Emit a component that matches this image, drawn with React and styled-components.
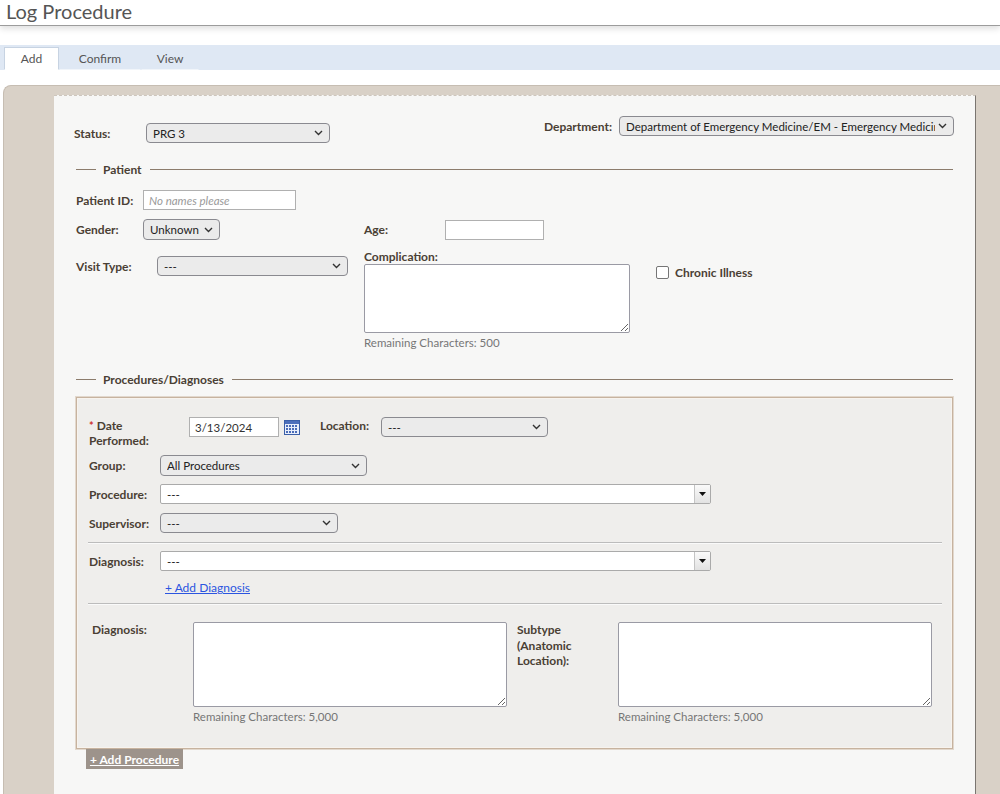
import React from "react";
import styled, { createGlobalStyle } from "styled-components";

const GlobalStyle = createGlobalStyle`
    body {
        margin: 0;
        background: #fff;
        font-family: "Lato", "Liberation Sans", sans-serif;
        font-size: 12px;
        color: #222;
    }
`;

const Header = styled.div`
    height: 25px;
    border-bottom: 1px solid #9c9c9c;
    box-shadow: 0 3px 6px rgba(0, 0, 0, 0.12);
    padding-left: 6px;
`;

const Title = styled.h1`
    margin: 0;
    font-size: 20px;
    font-weight: 400;
    line-height: 22px;
    color: #555;
`;

const TabBar = styled.div`
    display: flex;
    margin-top: 19px;
    height: 25px;
    padding-left: 4px;
    background: #dfe8f4;
    align-items: flex-end;
`;

const Tab = styled.div`
    width: ${(p) => p.$w}px;
    height: 23px;
    box-sizing: border-box;
    display: flex;
    align-items: center;
    justify-content: center;
    color: #555;
    background: ${(p) => (p.$active ? "#fff" : "transparent")};
    border: 1px solid ${(p) => (p.$active ? "#c7d3e2" : "transparent")};
    border-bottom: 1px solid ${(p) => (p.$active ? "#fff" : "#f1f5fa")};
`;

const Frame = styled.div`
    margin: 15px 0 0 3px;
    background: #d9d1c7;
    border-top: 1px solid #c6bdb2;
    border-left: 1px solid #c6bdb2;
    border-top-left-radius: 8px;
    padding: 9px 24px 0 50px;
`;

const Panel = styled.div`
    background: #f7f7f6;
    border-top: 1px dashed #cdc6bd;
    border-right: 1px solid #7a7570;
    padding: 20px 21px 40px 20px;
`;

const TopRow = styled.div`
    display: flex;
    justify-content: space-between;
    align-items: flex-start;
`;

const Group = styled.div`
    display: flex;
    align-items: ${(p) => p.$align || "center"};
    margin-top: ${(p) => p.$mt || 0}px;
    margin-left: ${(p) => p.$ml || 0}px;
    width: ${(p) => (p.$w ? `${p.$w}px` : "auto")};
    flex-shrink: 0;
`;

const Label = styled.label`
    display: block;
    flex-shrink: 0;
    width: ${(p) => (p.$w ? `${p.$w}px` : "auto")};
    margin-right: ${(p) => p.$mr || 0}px;
    margin-top: ${(p) => p.$mt || 0}px;
    margin-left: ${(p) => p.$ml || 0}px;
    font-weight: 700;
    color: #4a4034;
    line-height: ${(p) => p.$lh || 15}px;
`;

const Required = styled.span`
    color: #d0312d;
    margin-right: 3px;
    font-size: 11px;
`;

const SelectBox = styled.div`
    display: flex;
    align-items: center;
    justify-content: space-between;
    box-sizing: border-box;
    width: ${(p) => p.$w}px;
    height: ${(p) => p.$h || 20}px;
    padding: 0 6px 0 6px;
    background: #ebebeb;
    border: 1px solid #8a8a90;
    border-radius: 4px;
    color: #222;
    font-size: 11.5px;
    white-space: nowrap;
    overflow: hidden;

    & span {
        overflow: hidden;
    }

    & svg {
        flex-shrink: 0;
        margin-left: 3px;
    }
`;

const TextInput = styled.input`
    box-sizing: border-box;
    width: ${(p) => p.$w}px;
    height: 20px;
    margin: 0;
    padding: 0 5px;
    border: 1px solid #b0b0b0;
    background: #fff;
    font-family: inherit;
    font-size: 11.5px;
    color: #333;
    outline: none;

    &::placeholder {
        color: #9a9a9a;
        font-style: italic;
    }
`;

const TextArea = styled.textarea`
    display: block;
    box-sizing: border-box;
    width: ${(p) => p.$w}px;
    height: ${(p) => p.$h}px;
    margin: 0;
    border: 1px solid #9a9aa4;
    border-radius: 2px;
    background: #fff;
    font-family: inherit;
    resize: both;
`;

const Remaining = styled.div`
    margin-top: 3px;
    line-height: 14px;
    font-size: 11.5px;
    color: #767676;
`;

const Legend = styled.div`
    display: flex;
    align-items: center;
    height: 16px;
    margin-top: ${(p) => p.$mt}px;
    font-weight: 700;
    color: #4a4034;

    &::before,
    &::after {
        content: "";
        height: 1px;
        background: #8c7c6c;
    }

    &::before {
        width: 20px;
    }

    &::after {
        flex: 1;
    }

    & span {
        padding: 0 8px 0 7px;
    }
`;

const Fieldset = styled.div`
    margin: 0 1px 0 2px;
`;

const Row = styled.div`
    display: flex;
    align-items: ${(p) => p.$align || "center"};
    margin-top: ${(p) => p.$mt || 0}px;
`;

const Column = styled.div`
    display: flex;
    flex-direction: column;
`;

const CheckBox = styled.span`
    display: inline-block;
    box-sizing: border-box;
    width: 13px;
    height: 13px;
    margin-right: 6px;
    border: 1px solid #767676;
    border-radius: 2px;
    background: #fff;
`;

const ProcBox = styled.div`
    margin-top: 10px;
    background: #efeeec;
    border: 1px solid #c7b39f;
    box-shadow: inset 0 0 0 1px #f7f3ee, 0 0 0 1px #e2d8cd;
    padding: 19px 11px 24px 12px;
`;

const Divider = styled.div`
    margin: ${(p) => p.$mt}px -1px 0;
    border-top: 1px solid #bcbcbc;
    border-bottom: 1px solid #fafafa;
`;

const Combo = styled.div`
    display: flex;
    width: 551px;
    height: 20px;
    box-sizing: border-box;
    border: 1px solid #aaa;
    border-radius: 2px;
    background: #fff;
`;

const ComboText = styled.div`
    flex: 1;
    display: flex;
    align-items: center;
    padding-left: 6px;
    font-size: 11.5px;
    color: #222;
`;

const ComboButton = styled.div`
    width: 15px;
    display: flex;
    align-items: center;
    justify-content: center;
    border-left: 1px solid #c4c4c4;
    background: linear-gradient(#fafafa, #e2e2e2);
`;

const AddLink = styled.a`
    display: block;
    margin: 10px 0 0 5px;
    line-height: 14px;
    color: #2b55e0;
    text-decoration: underline;
    cursor: pointer;
`;

const AddButton = styled.button`
    display: block;
    margin: 0 0 0 10px;
    height: 20px;
    width: 97px;
    padding: 0;
    border: none;
    background: #9d938b;
    color: #fff;
    font-family: inherit;
    font-size: 12px;
    font-weight: 700;
    text-decoration: underline;
    cursor: pointer;
`;

const Chevron = () => (
    <svg width="9" height="6" viewBox="0 0 9 6">
        <path d="M1 1 L4.5 4.5 L8 1" fill="none" stroke="#333" strokeWidth="1.4" />
    </svg>
);

const Caret = () => (
    <svg width="7" height="4" viewBox="0 0 7 4">
        <path d="M0 0 H7 L3.5 4 Z" fill="#111" />
    </svg>
);

const CalendarIcon = () => (
    <svg width="16" height="15" viewBox="0 0 16 15" style={{ margin: "3px 0 0 5px" }}>
        <rect x="0.5" y="0.5" width="15" height="14" fill="#e8eefa" stroke="#3b5fa8" />
        <rect x="1" y="1" width="14" height="3" fill="#4c6fbb" />
        {[0, 1, 2, 3].map((c) =>
            [0, 1, 2].map((r) => (
                <rect key={`${c}-${r}`} x={2 + c * 3} y={5 + r * 3} width="2" height="2" fill="#4a6cb8" />
            ))
        )}
    </svg>
);

const Select = ({ w, h, value }) => (
    <SelectBox $w={w} $h={h}>
        <span>{value}</span>
        <Chevron />
    </SelectBox>
);

const ComboSelect = () => (
    <Combo>
        <ComboText>---</ComboText>
        <ComboButton>
            <Caret />
        </ComboButton>
    </Combo>
);

const App = () => {
    return (
        <>
            <GlobalStyle />
            <Header>
                <Title>Log Procedure</Title>
            </Header>
            <TabBar>
                <Tab $w={55} $active>Add</Tab>
                <Tab $w={82}>Confirm</Tab>
                <Tab $w={58}>View</Tab>
            </TabBar>
            <Frame>
                <Panel>
                    <TopRow>
                        <Group $mt={7}>
                            <Label $w={72}>Status:</Label>
                            <Select w={184} value="PRG 3" />
                        </Group>
                        <Group>
                            <Label $mr={7}>Department:</Label>
                            <Select w={335} value="Department of Emergency Medicine/EM - Emergency Medicine" />
                        </Group>
                    </TopRow>

                    <Fieldset>
                        <Legend $mt={18}>
                            <span>Patient</span>
                        </Legend>
                        <Row $mt={13}>
                            <Label $w={67}>Patient ID:</Label>
                            <TextInput $w={153} placeholder="No names please" />
                        </Row>
                        <Row $mt={9}>
                            <Group $w={288}>
                                <Label $w={67}>Gender:</Label>
                                <Select w={77} h={21} value="Unknown" />
                            </Group>
                            <Group>
                                <Label $w={81}>Age:</Label>
                                <TextInput $w={99} />
                            </Group>
                        </Row>
                        <Row $mt={9} $align="flex-start">
                            <Group $w={288} $mt={7}>
                                <Label $w={81}>Visit Type:</Label>
                                <Select w={191} value="---" />
                            </Group>
                            <Column>
                                <Label>Complication:</Label>
                                <TextArea $w={266} $h={69} />
                                <Remaining>Remaining Characters: 500</Remaining>
                            </Column>
                            <Group $ml={26} $mt={16}>
                                <CheckBox />
                                <Label>Chronic Illness</Label>
                            </Group>
                        </Row>

                        <Legend $mt={21}>
                            <span>Procedures/Diagnoses</span>
                        </Legend>
                        <ProcBox>
                            <Row $align="flex-start">
                                <Label $w={100} $mt={1}>
                                    <Required>*</Required>Date
                                    <br />
                                    Performed:
                                </Label>
                                <TextInput $w={90} defaultValue="3/13/2024" />
                                <CalendarIcon />
                                <Label $w={61} $ml={20} $mt={1}>
                                    Location:
                                </Label>
                                <Select w={167} value="---" />
                            </Row>
                            <Row $mt={7}>
                                <Label $w={71}>Group:</Label>
                                <Select w={207} h={21} value="All Procedures" />
                            </Row>
                            <Row $mt={8}>
                                <Label $w={71}>Procedure:</Label>
                                <ComboSelect />
                            </Row>
                            <Row $mt={9}>
                                <Label $w={71}>Supervisor:</Label>
                                <Select w={178} value="---" />
                            </Row>
                            <Divider $mt={9} />
                            <Row $mt={7}>
                                <Label $w={71}>Diagnosis:</Label>
                                <ComboSelect />
                            </Row>
                            <Row>
                                <Group $w={71} />
                                <AddLink>+ Add Diagnosis</AddLink>
                            </Row>
                            <Divider $mt={8} />
                            <Row $mt={17} $align="flex-start">
                                <Label $w={101} $ml={3} $lh={15.5}>
                                    Diagnosis:
                                </Label>
                                <Column>
                                    <TextArea $w={314} $h={85} />
                                    <Remaining>Remaining Characters: 5,000</Remaining>
                                </Column>
                                <Label $w={101} $ml={10} $lh={15.5}>
                                    Subtype
                                    <br />
                                    (Anatomic
                                    <br />
                                    Location):
                                </Label>
                                <Column>
                                    <TextArea $w={314} $h={85} />
                                    <Remaining>Remaining Characters: 5,000</Remaining>
                                </Column>
                            </Row>
                        </ProcBox>
                        <AddButton>+ Add Procedure</AddButton>
                    </Fieldset>
                </Panel>
            </Frame>
        </>
    );
};

export default App;
